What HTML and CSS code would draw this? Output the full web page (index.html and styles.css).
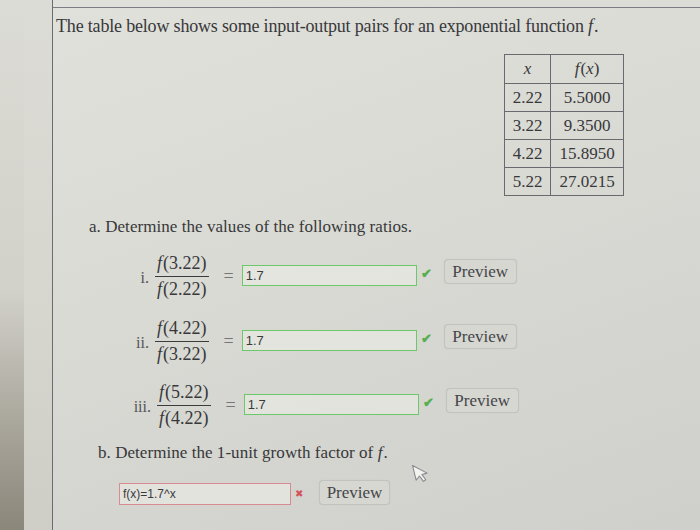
FILE: index.html
```html
<!DOCTYPE html>
<html>
<head>
<meta charset="utf-8">
<link rel="stylesheet" href="styles.css">
</head>
<body>
<div class="page">
  <div class="strip"><div class="strip-shadow"></div></div>
  <div class="panel">
    <div class="topline"></div>
    <p class="intro">The table below shows some input-output pairs for an exponential function <i class="mf">f</i>.</p>
    <div class="table-wrap">
      <table class="data">
        <tr class="head"><th><i>x</i></th><th><i class="mf">f</i>(<i>x</i>)</th></tr>
        <tr><td>2.22</td><td>5.5000</td></tr>
        <tr><td>3.22</td><td>9.3500</td></tr>
        <tr><td>4.22</td><td>15.8950</td></tr>
        <tr><td>5.22</td><td>27.0215</td></tr>
      </table>
    </div>
    <p class="part part-a">a. Determine the values of the following ratios.</p>

    <div class="ratio r1">
      <span class="label">i.</span>
      <span class="frac"><span class="num"><i class="mf">f</i>(3.22)</span><span class="den"><i class="mf">f</i>(2.22)</span></span>
      <span class="eq">=</span>
      <span class="answer ok">1.7</span>
      <span class="mark check">&#10004;</span>
      <span class="preview">Preview</span>
    </div>

    <div class="ratio r2">
      <span class="label">ii.</span>
      <span class="frac"><span class="num"><i class="mf">f</i>(4.22)</span><span class="den"><i class="mf">f</i>(3.22)</span></span>
      <span class="eq">=</span>
      <span class="answer ok">1.7</span>
      <span class="mark check">&#10004;</span>
      <span class="preview">Preview</span>
    </div>

    <div class="ratio r3">
      <span class="label">iii.</span>
      <span class="frac"><span class="num"><i class="mf">f</i>(5.22)</span><span class="den"><i class="mf">f</i>(4.22)</span></span>
      <span class="eq">=</span>
      <span class="answer ok">1.7</span>
      <span class="mark check">&#10004;</span>
      <span class="preview">Preview</span>
    </div>

    <p class="part part-b">b. Determine the 1-unit growth factor of <i class="mf">f</i>.</p>
    <div class="growth">
      <span class="answer bad">f(x)=1.7^x</span>
      <span class="mark cross">&#10006;</span>
      <span class="preview">Preview</span>
    </div>
  </div>
  <svg class="cursor" width="20" height="22" viewBox="0 0 20 22">
    <path d="M2 2 L3 17 L7 13.5 L10 19.5 L12.5 18.3 L9.6 12.4 L15 12 Z" fill="#f2f2ee" stroke="#8a8a90" stroke-width="1.1" stroke-linejoin="round"/>
  </svg>
</div>
</body>
</html>
```
FILE: styles.css
```css
html, body {
  margin: 0;
  padding: 0;
}
body {
  width: 700px;
  height: 530px;
  overflow: hidden;
  font-family: "Liberation Serif", "Times New Roman", serif;
  color: #38383a;
  background: #cfcfca;
}
.page {
  position: relative;
  display: flex;
  width: 700px;
  height: 530px;
}
.strip {
  position: relative;
  width: 52px;
  flex: none;
  background: linear-gradient(180deg, #dcdcd6 0%, #d6d5ce 60%, #cfcec6 100%);
}
.strip-shadow {
  position: absolute;
  left: 0;
  top: 0;
  bottom: 0;
  width: 24px;
  background: linear-gradient(180deg, rgba(120,115,100,0) 0%, rgba(120,115,100,0.05) 55%, rgba(110,104,90,0.7) 100%);
}
.panel {
  flex: 1;
  border-left: 1px solid #6c6a72;
  background: linear-gradient(160deg, #e0e1db 0%, #d9dad4 45%, #cfd0cb 100%);
}
.topline {
  height: 1px;
  margin-top: 7px;
  background: #7d7b84;
}
.intro {
  margin: 6px 0 0 3px;
  height: 24px;
  line-height: 24px;
  font-size: 18px;
  letter-spacing: -0.18px;
}
.mf {
  padding-right: 1px;
}
.table-wrap {
  display: flex;
  justify-content: flex-end;
  margin-top: 16px;
  padding-right: 76px;
}
.data {
  border-collapse: collapse;
  font-size: 17px;
  border: 1px solid #57565c;
}
.data th, .data td {
  border: 1px solid #6a696f;
  padding: 0;
  height: 27px;
  text-align: center;
  font-weight: normal;
}
.data tr.head th {
  height: 28px;
}
.data th:first-child, .data td:first-child {
  width: 45px;
}
.data th:last-child, .data td:last-child {
  width: 72px;
}
.part {
  margin: 0;
  height: 24px;
  line-height: 24px;
  font-size: 17px;
  letter-spacing: 0.05px;
}
.part-a {
  margin-top: 19px;
  margin-left: 36px;
}
.ratio {
  display: flex;
  align-items: center;
  height: 52px;
}
.r1 { margin-top: 11px; margin-left: 56px; }
.r2 { margin-top: 13px; margin-left: 56px; }
.r3 { margin-top: 12px; margin-left: 58px; }
.label {
  width: 40px;
  text-align: right;
  font-size: 16px;
  color: #55555a;
  margin-top: 4px;
}
.frac {
  display: inline-flex;
  flex-direction: column;
  align-items: center;
  margin-left: 6px;
  font-size: 18px;
}
.num {
  line-height: 22px;
  padding: 0 2px 2px;
  border-bottom: 1.5px solid #3b3b3d;
}
.den {
  line-height: 22px;
  padding-top: 1px;
}
.eq {
  margin-left: 15px;
  font-size: 18px;
  color: #76767a;
}
.answer {
  display: inline-block;
  box-sizing: border-box;
  font-family: "Liberation Sans", Arial, sans-serif;
  font-size: 13px;
  color: #3a3a3c;
  padding-left: 3px;
  background: rgba(236,238,232,0.55);
}
.ok {
  width: 175px;
  height: 21px;
  line-height: 19px;
  margin-left: 8px;
  margin-top: -2px;
  border: 1px solid #6cc96a;
}
.mark {
  display: inline-block;
  width: 14px;
  text-align: center;
}
.check {
  margin-left: 3px;
  margin-top: -4px;
  font-size: 13px;
  font-weight: bold;
  color: #57b04f;
}
.preview {
  display: inline-block;
  box-sizing: border-box;
  width: 73px;
  height: 25px;
  line-height: 23px;
  text-align: center;
  font-size: 17px;
  color: #45454a;
  background: #d6d7d1;
  border: 1px solid #c2c3be;
  border-radius: 4px;
  box-shadow: 0 0 1px rgba(0,0,0,0.1);
  margin-left: 10px;
  margin-top: -10px;
}
.part-b {
  margin-top: 10px;
  margin-left: 45px;
}
.growth {
  display: flex;
  align-items: center;
  margin-top: 17px;
  margin-left: 66px;
}
.bad {
  width: 172px;
  height: 22px;
  line-height: 20px;
  font-size: 12px;
  border: 1px solid #d88c92;
}
.cross {
  margin-left: 1px;
  font-size: 10px;
  color: #d4525c;
}
.growth .preview {
  width: 71px;
  margin-left: 13px;
  margin-top: -2px;
}
.cursor {
  position: absolute;
  left: 412px;
  top: 462px;
  transform: rotate(-10deg);
}
```
